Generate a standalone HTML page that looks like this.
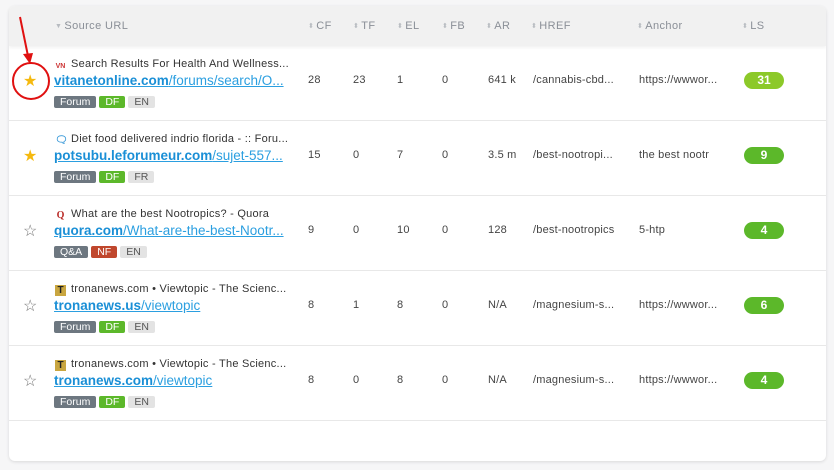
<!DOCTYPE html><html><head><style>
body{margin:0;width:834px;height:470px;background:#f6f6f7;font-family:"Liberation Sans",sans-serif;position:relative;overflow:hidden}
.card{position:absolute;left:9px;top:6px;width:817px;height:455px;background:#fff;border-radius:6px;box-shadow:0 1px 3px rgba(0,0,0,.12);overflow:hidden}
.hdr{position:absolute;left:0;top:0;width:100%;height:40px;background:#f1f1f1;box-shadow:0 2px 3px rgba(0,0,0,.05)}
.h{position:absolute;top:14px;font-size:11px;color:#8a8f97;letter-spacing:.4px}
.h i{font-style:normal;font-size:7px;color:#b7bbc0;margin-right:2px;vertical-align:1px}
.row{position:absolute;left:0;width:100%;height:74px;border-bottom:1px solid #e8e8e8}
.t{position:absolute;left:46px;top:12px;font-size:11px;color:#333;white-space:nowrap;letter-spacing:.25px}
.fav{display:inline-block;width:11px;height:11px;margin-right:5px;vertical-align:-1px;font-size:10px;font-weight:bold;text-align:center;line-height:11px;letter-spacing:0}
.l{position:absolute;left:45px;top:27px;font-size:13.5px;color:#2b9fe0;text-decoration:underline;white-space:nowrap}
.l b{color:#1a8fd6}
.bd{position:absolute;left:45px;top:50px;font-size:10.5px;white-space:nowrap}
.bd span{display:inline-block;padding:0 6px;height:12px;line-height:12px;border-radius:2px;margin-right:3px}
.g{background:#6d7780;color:#fff}.d{background:#5cb82a;color:#fff}.e{background:#e3e3e3;color:#555}.n{background:#c0472d;color:#fff}
.c{position:absolute;top:28px;font-size:11px;color:#444;white-space:nowrap;letter-spacing:.2px}
.ls{position:absolute;left:735px;top:26px;width:40px;height:17px;border-radius:9px;background:#5cb82a;color:#fff;font-size:12px;font-weight:bold;text-align:center;line-height:17px}
.st{position:absolute;left:14px;top:25px;font-size:16px}
</style></head><body>
<div class="card">
<div class="hdr"></div>
<div class="h" style="left:46px"><i>▼</i>Source URL</div>
<div class="h" style="left:299px"><i>⬍</i>CF</div>
<div class="h" style="left:344px"><i>⬍</i>TF</div>
<div class="h" style="left:388px"><i>⬍</i>EL</div>
<div class="h" style="left:433px"><i>⬍</i>FB</div>
<div class="h" style="left:477px"><i>⬍</i>AR</div>
<div class="h" style="left:522px"><i>⬍</i>HREF</div>
<div class="h" style="left:628px"><i>⬍</i>Anchor</div>
<div class="h" style="left:733px"><i>⬍</i>LS</div>

<div class="row" style="top:40px">
<div class="st" style="color:#f5b90f">★</div>
<div class="t"><span class="fav" style="color:#c33;font-size:7px">VN</span>Search Results For Health And Wellness...</div>
<div class="l"><b>vitanetonline.com</b>/forums/search/O...</div>
<div class="bd"><span class="g">Forum</span><span class="d">DF</span><span class="e">EN</span></div>
<div class="c" style="left:299px">28</div><div class="c" style="left:344px">23</div><div class="c" style="left:388px">1</div><div class="c" style="left:433px">0</div><div class="c" style="left:479px">641 k</div><div class="c" style="left:524px">/cannabis-cbd...</div><div class="c" style="left:630px">https://wwwor...</div>
<div class="ls" style="background:#8cc929">31</div></div>

<div class="row" style="top:115px">
<div class="st" style="color:#f5b90f">★</div>
<div class="t"><span class="fav" style="color:#3a9ad9">🗨</span>Diet food delivered indrio florida - :: Foru...</div>
<div class="l"><b>potsubu.leforumeur.com</b>/sujet-557...</div>
<div class="bd"><span class="g">Forum</span><span class="d">DF</span><span class="e">FR</span></div>
<div class="c" style="left:299px">15</div><div class="c" style="left:344px">0</div><div class="c" style="left:388px">7</div><div class="c" style="left:433px">0</div><div class="c" style="left:479px">3.5 m</div><div class="c" style="left:524px">/best-nootropi...</div><div class="c" style="left:630px">the best nootr</div>
<div class="ls">9</div></div>

<div class="row" style="top:190px">
<div class="st" style="color:#777">☆</div>
<div class="t"><span class="fav" style="color:#b92b27;font-family:'Liberation Serif',serif">Q</span>What are the best Nootropics? - Quora</div>
<div class="l"><b>quora.com</b>/What-are-the-best-Nootr...</div>
<div class="bd"><span class="g">Q&amp;A</span><span class="n">NF</span><span class="e">EN</span></div>
<div class="c" style="left:299px">9</div><div class="c" style="left:344px">0</div><div class="c" style="left:388px">10</div><div class="c" style="left:433px">0</div><div class="c" style="left:479px">128</div><div class="c" style="left:524px">/best-nootropics</div><div class="c" style="left:630px">5-htp</div>
<div class="ls">4</div></div>

<div class="row" style="top:265px">
<div class="st" style="color:#777">☆</div>
<div class="t"><span class="fav" style="background:#c9a640;color:#222">T</span>tronanews.com • Viewtopic - The Scienc...</div>
<div class="l"><b>tronanews.us</b>/viewtopic</div>
<div class="bd"><span class="g">Forum</span><span class="d">DF</span><span class="e">EN</span></div>
<div class="c" style="left:299px">8</div><div class="c" style="left:344px">1</div><div class="c" style="left:388px">8</div><div class="c" style="left:433px">0</div><div class="c" style="left:479px">N/A</div><div class="c" style="left:524px">/magnesium-s...</div><div class="c" style="left:630px">https://wwwor...</div>
<div class="ls">6</div></div>

<div class="row" style="top:340px">
<div class="st" style="color:#777">☆</div>
<div class="t"><span class="fav" style="background:#c9a640;color:#222">T</span>tronanews.com • Viewtopic - The Scienc...</div>
<div class="l"><b>tronanews.com</b>/viewtopic</div>
<div class="bd"><span class="g">Forum</span><span class="d">DF</span><span class="e">EN</span></div>
<div class="c" style="left:299px">8</div><div class="c" style="left:344px">0</div><div class="c" style="left:388px">8</div><div class="c" style="left:433px">0</div><div class="c" style="left:479px">N/A</div><div class="c" style="left:524px">/magnesium-s...</div><div class="c" style="left:630px">https://wwwor...</div>
<div class="ls">4</div></div>
</div>
<svg style="position:absolute;left:0;top:0" width="834" height="470">
<circle cx="31" cy="81" r="18" fill="none" stroke="#e01010" stroke-width="2"/>
<line x1="20" y1="17" x2="28" y2="56" stroke="#e01010" stroke-width="2"/>
<polygon points="23,54 33,53 30,64" fill="#e01010"/>
</svg>
</body></html>
